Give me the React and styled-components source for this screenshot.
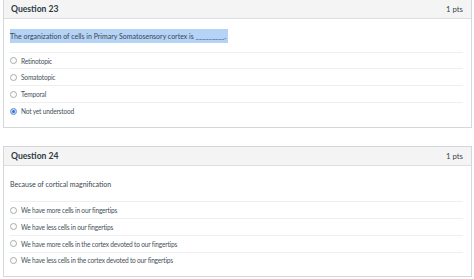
import React from "react";
import styled, { createGlobalStyle } from "styled-components";

const Global = createGlobalStyle`
  html, body { margin: 0; padding: 0; background: #fff; }
  body { font-family: Lato, "Noto Sans", sans-serif; color: #2d3b45; }
`;

const Page = styled.div`
  display: flex;
  flex-direction: column;
  gap: 18px;
  padding: 0 2px 0 3px;
`;

const Card = styled.section`
  border: 1px solid #d3d7da;
  border-top: ${(p) => (p.$cutTop ? "none" : "1px solid #d3d7da")};
  background: #fff;
  padding-bottom: ${(p) => p.$pb}px;
`;

const Header = styled.div`
  display: flex;
  justify-content: space-between;
  align-items: center;
  height: 19px;
  padding: 0 8px 0 7px;
  background: #f4f4f4;
  border-bottom: 1px solid #dcdfe1;
  box-sizing: border-box;
`;

const Title = styled.div`
  font-size: 8.6px;
  font-weight: 700;
  color: #2d3b45;
`;

const Pts = styled.div`
  font-size: 7.8px;
  color: #3a464f;
`;

const Body = styled.div`
  padding: 0 8px 0 6px;
`;

const Question = styled.div`
  display: flex;
  align-items: center;
  height: ${(p) => p.$h}px;
  font-size: 7px;
  color: #3a464f;
`;

const Highlight = styled.span`
  background: #b4d3f6;
  padding: 3px 2px 3px 0;
`;

const Answers = styled.div`
  display: flex;
  flex-direction: column;
`;

const Answer = styled.label`
  display: flex;
  align-items: center;
  gap: 4px;
  height: ${(p) => p.$h}px;
  border-top: 1px solid #eceeef;
  box-sizing: border-box;
  font-size: 6.6px;
  letter-spacing: -0.2px;
  color: #46525b;
`;

const Radio = styled.span`
  width: 5px;
  height: 5px;
  border-radius: 50%;
  border: 1px solid ${(p) => (p.$checked ? "#7ea9e4" : "#a3abb0")};
  background: ${(p) => (p.$checked ? "#2f6fd6" : "#fff")};
  box-shadow: ${(p) => (p.$checked ? "inset 0 0 0 1px #d3e2f7" : "none")};
  flex: none;
`;

const q1 = ["Retinotopic", "Somatotopic", "Temporal", "Not yet understood"];
const q2 = [
  "We have more cells in our fingertips",
  "We have less cells in our fingertips",
  "We have more cells in the cortex devoted to our fingertips",
  "We have less cells in the cortex devoted to our fingertips",
];

export default function App() {
  return (
    <>
      <Global />
      <Page>
        <Card $cutTop $pb={8}>
          <Header>
            <Title>Question 23</Title>
            <Pts>1 pts</Pts>
          </Header>
          <Body>
            <Question $h={33}>
              <Highlight>
                The organization of cells in Primary Somatosensory cortex is _________.
              </Highlight>
            </Question>
            <Answers>
              {q1.map((a, i) => (
                <Answer key={a} $h={i === 0 ? 16 : 17}>
                  <Radio $checked={i === 3} />
                  {a}
                </Answer>
              ))}
            </Answers>
          </Body>
        </Card>
        <Card $pb={8}>
          <Header>
            <Title>Question 24</Title>
            <Pts>1 pts</Pts>
          </Header>
          <Body>
            <Question $h={35}>Because of cortical magnification</Question>
            <Answers>
              {q2.map((a, i) => (
                <Answer key={a} $h={i % 2 === 0 ? 17 : 16.5}>
                  <Radio />
                  {a}
                </Answer>
              ))}
            </Answers>
          </Body>
        </Card>
      </Page>
    </>
  );
}
